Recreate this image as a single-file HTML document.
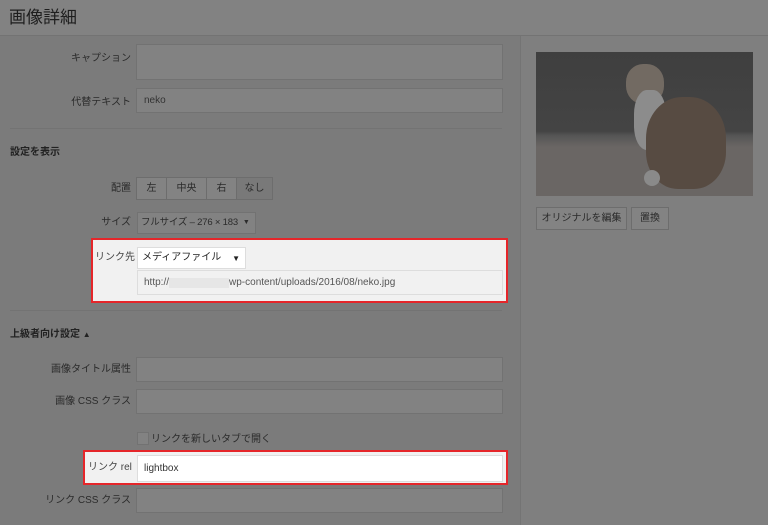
<!DOCTYPE html><html><head><meta charset="utf-8"><style>
*{box-sizing:border-box}body{margin:0;width:768px;height:525px;overflow:hidden;background:#7b7b7b;font-family:"Liberation Sans","Noto Sans CJK JP",sans-serif;font-size:10px;line-height:12px;color:#2a2a2a;position:relative}
.a{position:absolute}
.hd{left:0;top:0;width:768px;height:36px;background:#828282;border-bottom:1px solid #737373}
.hd span{position:absolute;left:9px;top:7px;font-size:17px;line-height:22px;color:#1e1e1e}
.rp{left:520px;top:36px;width:248px;height:489px;background:#7f7f7f;border-left:1px solid #747474}
.in{background:#828282;border:1px solid #727272;display:flex;align-items:center;padding:0 7px;white-space:nowrap}
.lb{text-align:right;width:120px;font-size:10px;color:#2b2b2b;white-space:nowrap}
.sep{height:1px;background:#737373;left:10px;width:492px}
.btn{background:#838383;border:1px solid #6d6d6d;font-size:10px;text-align:center;color:#2b2b2b;display:flex;align-items:center;justify-content:center;white-space:nowrap}
.red{border:2px solid #e5262a;background:#f1f1f1}
</style></head><body>
<div class="a hd"><span>画像詳細</span></div>
<div class="a rp"></div>
<div class="a lb" style="left:11px;top:53px">キャプション</div>
<div class="a in" style="left:136px;top:44px;width:367px;height:36px"></div>
<div class="a lb" style="left:11px;top:97px">代替テキスト</div>
<div class="a in" style="left:136px;top:88px;width:367px;height:25px;color:#333">neko</div>
<div class="a sep" style="top:128px"></div>
<div class="a" style="left:10px;top:147px;font-weight:bold;color:#222">設定を表示</div>
<div class="a lb" style="left:11px;top:183px">配置</div>
<div class="a btn" style="left:136px;top:177px;width:31px;height:23px">左</div>
<div class="a btn" style="left:166px;top:177px;width:41px;height:23px">中央</div>
<div class="a btn" style="left:206px;top:177px;width:31px;height:23px">右</div>
<div class="a btn" style="left:236px;top:177px;width:37px;height:23px;background:#797979">なし</div>
<div class="a lb" style="left:11px;top:217px">サイズ</div>
<div class="a in" style="left:137px;top:212px;width:119px;height:22px;padding:0 3px;color:#2b2b2b;font-size:9.5px;letter-spacing:-0.2px">フルサイズ – 276 × 183<span style="margin-left:5px;font-size:7px">▼</span></div>
<div class="a red" style="left:91px;top:238px;width:417px;height:65px"></div>
<div class="a" style="left:95px;top:252px;color:#444">リンク先</div>
<div class="a" style="left:137px;top:247px;width:109px;height:22px;background:#fff;border:1px solid #ddd;padding:0 4px;color:#222;display:flex;align-items:center">メディアファイル<span style="position:absolute;right:5px;top:5px;font-size:8px">▼</span></div>
<div class="a" style="left:137px;top:270px;width:366px;height:25px;border:1px solid #ddd;background:#f1f1f1;padding:0 6px;color:#555;display:flex;align-items:center;white-space:nowrap">http://<span style="display:inline-block;width:60px;height:10px;background:#e6e6e6"></span>wp-content/uploads/2016/08/neko.jpg</div>
<div class="a sep" style="top:310px"></div>
<div class="a" style="left:10px;top:329px;font-weight:bold;color:#222">上級者向け設定 <span style="font-size:8px">▲</span></div>
<div class="a lb" style="left:11px;top:364px">画像タイトル属性</div>
<div class="a in" style="left:136px;top:357px;width:367px;height:25px"></div>
<div class="a lb" style="left:11px;top:396px">画像 CSS クラス</div>
<div class="a in" style="left:136px;top:389px;width:367px;height:25px"></div>
<div class="a in" style="left:137px;top:432px;width:12px;height:13px;padding:0"></div>
<div class="a" style="left:151px;top:434px">リンクを新しいタブで開く</div>
<div class="a red" style="left:83px;top:450px;width:425px;height:35px"></div>
<div class="a" style="left:88px;top:462px;color:#444">リンク rel</div>
<div class="a" style="left:137px;top:455px;width:366px;height:27px;background:#fff;border:1px solid #ddd;padding:0 6px;color:#333;display:flex;align-items:center">lightbox</div>
<div class="a lb" style="left:11px;top:495px">リンク CSS クラス</div>
<div class="a in" style="left:136px;top:488px;width:367px;height:25px"></div>
<div class="a" style="left:536px;top:52px;width:217px;height:144px;background:linear-gradient(#3f3f3f 0,#444 55%,#555 58%,#6a6664 66%,#6a6664 100%);overflow:hidden">
<div class="a" style="left:90px;top:12px;width:38px;height:40px;border-radius:45%;background:#726a62"></div>
<div class="a" style="left:98px;top:38px;width:32px;height:60px;border-radius:40%;background:#8c8c8c"></div>
<div class="a" style="left:110px;top:45px;width:80px;height:92px;border-radius:45% 45% 40% 40%;background:#574b42"></div>
<div class="a" style="left:108px;top:118px;width:16px;height:16px;border-radius:50%;background:#8a8a8a"></div>
</div>
<div class="a btn" style="left:536px;top:207px;width:91px;height:23px">オリジナルを編集</div>
<div class="a btn" style="left:631px;top:207px;width:38px;height:23px">置換</div>
</body></html>
